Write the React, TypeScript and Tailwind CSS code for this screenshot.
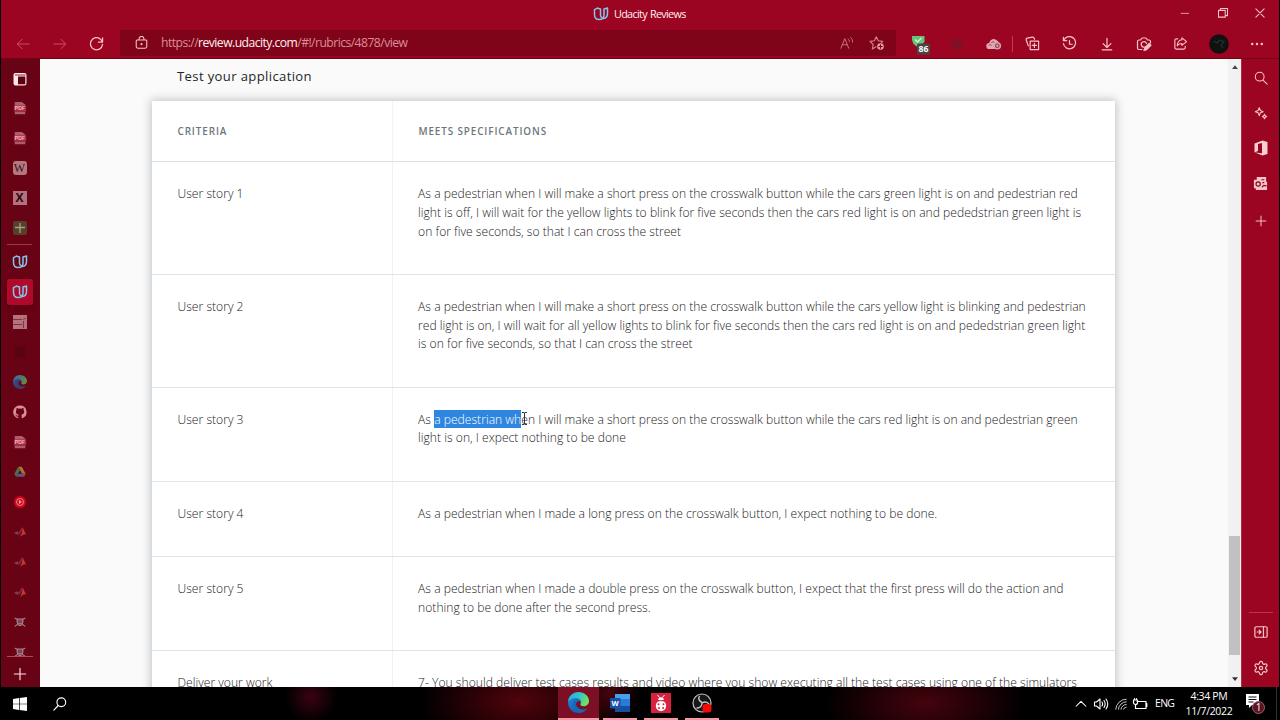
import React from "react";

type IconProps = { children: React.ReactNode; size?: string; color?: string; w?: number; box?: string };

function Icon({ children, size = "size-4", color = "text-[#f6c3c8]", w = 1, box = "0 0 16 16" }: IconProps) {
  return (
    <svg viewBox={box} className={`${size} ${color} shrink-0`} fill="none" stroke="currentColor" strokeWidth={w} strokeLinecap="round" strokeLinejoin="round">
      {children}
    </svg>
  );
}

function Udacity({ size = "size-4" }: { size?: string }) {
  return (
    <Icon size={size} color="text-[#86c3ea]" w={1.5}>
      <path d="M4.500 2.200L1.500 3.700v4.600c0 3.200 1.800 5.300 4.600 5.300C9 13.600 11 12 11 9V3l3.500-1v5.400c0 3-1.700 4.800-4.200 5.200" />
      <path d="M4.500 2.200L7.500 3v6.200c0 1.300.6 2 1.700 2.200" />
    </Icon>
  );
}

function Pdf() {
  return (
    <svg viewBox="0 0 16 16" className="size-3.5 shrink-0">
      <path d="M2 1h8l4 3v2H2zM2 12h12v3H2z" fill="#a9606c" />
      <rect x="1" y="5" width="14" height="7" fill="#b02a42" />
      <text x="8" y="10.800" textAnchor="middle" fontSize="6" fontWeight="700" fontFamily="Liberation Sans, sans-serif" fill="#f0c0c6">PDF</text>
    </svg>
  );
}

function Matlab() {
  return (
    <svg viewBox="0 0 16 16" className="size-3.5 shrink-0">
      <path d="M1 9l4-2 2 2-2 2z" fill="#6e4658" />
      <path d="M6 8.500c2-1 2.500-4.500 4-6l.5 4-3.500 5c-.8 0-.8-1.500-1.500-2z" fill="#8c2232" />
      <path d="M10.500 2.500c1.500 1 2.500 5 4.500 8.500-2-.7-3-.5-4.500 1l-2.500 1.500c2.500-4 3.200-7 2.500-11z" fill="#c23a3c" />
    </svg>
  );
}

function Skull() {
  return (
    <Icon size="size-3" color="text-[#a98088]" w={1.5}>
      <path d="M1.500 3l3 1.500M14.500 3l-3 1.500M1.500 13.500l3.500-2.500M14.500 13.500L11 11" />
      <path d="M5 4h6l1 3-1 3.500H5L4 7z" fill="#7c4652" /><path d="M6.500 12.500h3" />
    </Icon>
  );
}

function EdgeLogo({ size }: { size: string }) {
  return (
    <svg viewBox="0 0 20 20" className={`${size} shrink-0`}>
      <defs>
        <linearGradient id="edgeTop" x1="0" x2="1" y1="0" y2="0.3">
          <stop offset="0" stopColor="#2aa8de" />
          <stop offset="0.6" stopColor="#35c6c8" />
          <stop offset="1" stopColor="#6be35c" />
        </linearGradient>
        <linearGradient id="edgeLow" x1="0" x2="1" y1="0" y2="1">
          <stop offset="0" stopColor="#1b86d8" />
          <stop offset="1" stopColor="#124f9c" />
        </linearGradient>
      </defs>
      <path d="M0 10C0 4 4.500 0 10 0s10 4 10 8.500c0 3-2.200 5-5 5-2.500 0-3.500-1-3.200-1.800C13 10 12 6.500 8 6.500 4 6.500 1 8 0 10z" fill="url(#edgeTop)" />
      <path d="M0 10c1-2.800 4-4.300 7.500-4.300 2.700 0 4.500 1.800 4.700 3.300-1-.9-3.700-.5-4.400 1.800-.8 2.800 2 6 5.700 6 1.900 0 3.400-.6 4.700-1.200C16.500 18.300 13.600 20 10 20 4.500 20 0 15.500 0 10z" fill="url(#edgeLow)" />
      <path d="M5 9.500C3.500 14 7 19.500 12 19.800c3-.8 5-2.500 6.200-4.200-5 2.500-10.400 0-10.600-4C7.500 9.500 9 8 10.500 8 8.500 6.800 6 7.500 5 9.500z" fill="#1769b5" />
    </svg>
  );
}

function Slot({ children }: { children: React.ReactNode }) {
  return <div className="flex h-[30px] w-full shrink-0 items-center justify-center">{children}</div>;
}

function Tool({ children }: { children: React.ReactNode }) {
  return <div className="flex w-[37px] shrink-0 items-center justify-center">{children}</div>;
}

function TitleBar() {
  return (
    <div className="flex h-[30px] shrink-0 items-center">
      <div className="w-[592px]" />
      <div className="flex pb-[3px]"><Udacity /></div>
      <div className="ml-[5px] flex-1 pb-[2px] text-[10.800px] tracking-[-0.680px] whitespace-nowrap text-[#fff0f1] [word-spacing:1px]">Udacity Reviews</div>
      <div className="flex w-[112px] items-center justify-between pb-[4px]">
        <div className="flex w-[37px] justify-center"><Icon size="size-3"><path d="M1.500 8.500h10" /></Icon></div>
        <div className="flex w-[36px] justify-center">
          <Icon size="size-3"><path d="M2 4.500h9v9H2zM4.500 4.500V2h9.500v9.500h-3" strokeWidth="1.400" /></Icon>
        </div>
        <div className="flex w-[38px] justify-center"><Icon size="size-3" w={1.4}><path d="M2.500 2.500l11 11M13.500 2.500l-11 11" /></Icon></div>
      </div>
    </div>
  );
}

function Toolbar() {
  return (
    <div className="flex h-[29px] shrink-0 items-stretch border-b border-[#740217]">
      <div className="flex w-[119px] items-center pb-px pl-[3px]">
        <Tool><Icon size="size-3.5" color="text-[#d0505f]" w={1.100}><path d="M15 8H1.500M7 2.500L1.500 8 7 13.500" /></Icon></Tool>
        <Tool><Icon size="size-3.5" color="text-[#d0505f]" w={1.100}><path d="M1 8h13.500M9 2.500L14.500 8 9 13.500" /></Icon></Tool>
        <Tool><Icon size="size-[15px]" w={1.300}><path d="M14.300 6.500A6.500 6.500 0 1 0 14.500 9M14.500 2v4.500H10" /></Icon></Tool>
      </div>
      <div className="mb-[2px] flex w-[776px] items-center bg-[#800419]">
        <div className="flex w-[41px] justify-center pb-px pl-px">
          <Icon size="size-[13px]" w={1.3}><path d="M2.500 5h11a1 1 0 0 1 1 1v7a2 2 0 0 1-2 2h-9a2 2 0 0 1-2-2V6a1 1 0 0 1 1-1zM5 5V3.500a3 3 0 0 1 6 0V5" /><circle cx="8" cy="10" r=".6" fill="currentColor" /></Icon>
        </div>
        <div className="flex-1 text-[12.200px] tracking-[-0.560px] whitespace-nowrap text-[#da8d98]">
          https://<span className="text-[#fff0f1]">review.udacity.com</span>/#!/rubrics/4878/view
        </div>
        <div className="flex w-[30px] justify-center">
          <Icon size="size-3.5" color="text-[#cc7480]" w={1.1}><path d="M1 14L5.500 3 10 14M2.700 10h5.600M9.500 3.500c1 .8 1.300 2 1.300 3M12 1.500c1.800 1.300 2.500 3.500 2.300 5.500" /></Icon>
        </div>
        <div className="mr-1 flex w-[30px] justify-center">
          <Icon color="text-[#d8808c]" w={1.1}>
            <path d="M7 11.700L3.300 14l.9-4.500L1 6.400l4.400-.6L7.300 1.700l2 4.100 4.400.6-1.500 1.500" />
            <circle cx="11.500" cy="11.500" r="3.300" fill="#dda0a8" stroke="none" /><path d="M11.500 9.800v3.400M9.800 11.500h3.400" stroke="#800419" />
          </Icon>
        </div>
      </div>
      <div className="flex w-[116px] items-center pl-[5px]">
        <Tool>
          <svg viewBox="0 0 18 20" className="mt-0.5 h-5 w-[18px] overflow-visible">
            <path d="M1 1h12.500v6L7 12.500 2.500 9 1 5z" fill="#66c478" /><path d="M4 4.500l2.500 2.500L10.500 3" stroke="#d5f2d9" strokeWidth="1.300" fill="none" />
            <rect x="6" y="8.500" width="13" height="11" rx="1.500" fill="#4a4446" />
            <text x="12.500" y="17.300" textAnchor="middle" fontSize="8.600" fontWeight="700" fontFamily="Open Sans, sans-serif" fill="#fff">86</text>
          </svg>
        </Tool>
        <Tool><div className="size-2.5 rounded-xs bg-[#7e1226] blur-[1px]" /></Tool>
        <Tool>
          <svg viewBox="0 0 16 16" className="size-4">
            <path d="M3.500 13a3 3 0 0 1-.3-6A4.500 4.500 0 0 1 11 4.500a3 3 0 0 1 1.500 2L13 13z" fill="#e0a9b2" /><path d="M3 9.500c.5-1.200 2-1.200 2.500 0M5.500 6.500c.8-.8 2-.8 2.800 0" fill="none" stroke="#a33649" />
            <circle cx="11.300" cy="9.800" r="3.800" fill="#cfa4ae" /><circle cx="11.300" cy="9.800" r="1.800" fill="none" stroke="#8f2c40" />
          </svg>
        </Tool>
      </div>
      <div className="my-1.5 w-px bg-[#c33d50]" />
      <div className="flex flex-1 items-center pb-px pl-[1px]">
        <Tool><Icon size="size-[15px]" w={1.300}><path d="M5.500 5.500h9v9h-9zM10 7.800v4.400M7.800 10h4.400M3.500 10.500L1.300 4.300a1.500 1.500 0 0 1 1-2L8 1.300c.8-.1 1.500.3 1.800 1.200l.4 1" /></Icon></Tool>
        <Tool><Icon size="size-[15px]" w={1.300}><path d="M2 4.500A6.500 6.500 0 1 1 1.500 8M1.500 1.500v3.500H5M8 4.800v4h3" /></Icon></Tool>
        <Tool><Icon size="size-3.5" w={1.400}><path d="M8 1.500v10M3.500 7.500L8 12l4.500-4.500M2.500 14.700h11" /></Icon></Tool>
        <Tool><Icon w={1.200}><path d="M6 13.500H3a1.500 1.500 0 0 1-1.500-1.500V5.500A1.500 1.500 0 0 1 3 4h1.500L6 2h4l1.500 2H13a1.500 1.500 0 0 1 1.500 1.500V7M8.500 11a2.700 2.700 0 1 1 2-3.500" /><path d="M8 14.500l.8-2.700L13.200 7.500l1.800 1.800-4.300 4.300z" fill="currentColor" /></Icon></Tool>
        <Tool><Icon size="size-[15px]" w={1.200}><path d="M5 3H3.500A1.500 1.500 0 0 0 2 4.500v8A1.500 1.500 0 0 0 3.500 14h8a1.500 1.500 0 0 0 1.500-1.500V11M9.500 2l5 4-5 4V8C7 8 5.500 8.500 4.500 10.500 4.700 7 6.500 4.300 9.500 4z" /></Icon></Tool>
        <Tool>
          <svg viewBox="0 0 20 20" className="ml-0.5 size-5 shrink-0"><circle cx="10" cy="10" r="9.800" fill="#101212" /><path d="M5 7l3 2 3-3 4 2-3 3 2 3" stroke="#25302e" fill="none" strokeWidth="1.200" /></svg>
        </Tool>
        <div className="ml-px flex w-[40px] justify-center"><Icon size="size-3.5"><g fill="currentColor" stroke="none"><circle cx="2.500" cy="8" r="1.400" /><circle cx="8" cy="8" r="1.400" /><circle cx="13.500" cy="8" r="1.400" /></g></Icon></div>
      </div>
    </div>
  );
}

function LeftRail() {
  return (
    <div className="flex w-[39px] shrink-0 flex-col items-center bg-[#680215] pr-[2px]">
      <div className="flex h-[34px] shrink-0 items-center pt-[6px]">
        <svg viewBox="0 0 14 14" className="size-3.5"><path d="M2.500 1h9a2 2 0 0 1 2 2v8.500a2 2 0 0 1-2 2h-9a2 2 0 0 1-2-2V3a2 2 0 0 1 2-2z" fill="#ffe6e8" /><path d="M5 4.500h7.300v7.800H5z" fill="#5c0212" /><path d="M2 3h10.500" stroke="#8a2635" /></svg>
      </div>
      <Slot><Pdf /></Slot>
      <Slot><Pdf /></Slot>
      <Slot><div className="flex size-3.5 items-center justify-center rounded-[3px] bg-[#b57780] font-['Liberation_Serif',serif] text-[12px] text-[#3b1118]">W</div></Slot>
      <Slot><div className="flex size-3.5 items-center justify-center bg-[#b4727d] text-[12px] font-bold text-[#280a10]">X</div></Slot>
      <Slot><svg viewBox="0 0 14 14" className="size-3.5"><rect width="14" height="14" rx="2" fill="#554029" /><path d="M7 2v10M2 6.500h10" stroke="#a5a087" strokeWidth="1.300" /></svg></Slot>
      <div className="mt-px mb-[2px] h-px w-[25px] shrink-0 bg-[#9c3c4b]" />
      <Slot><Udacity /></Slot>
      <Slot><div className="flex size-[26px] items-center justify-center rounded-[3px] bg-[#b00a2a] shadow-md"><Udacity /></div></Slot>
      <Slot><svg viewBox="0 0 14 14" className="size-3.5"><rect width="14" height="14" fill="#b5717c" /><path d="M0 4.500h9M0 9.500h9M10 4.500l3-1.500M10.500 6v7" stroke="#84303f" /></svg></Slot>
      <Slot><div className="size-2.5 bg-[#580414] blur-[1px]" /></Slot>
      <Slot><div className="flex opacity-60"><EdgeLogo size="size-3.5" /></div></Slot>
      <Slot>
        <svg viewBox="0 0 16 16" className="size-3.5"><path fill="#d98e98" d="M8 .5a7.500 7.500 0 0 0-2.400 14.700c.4.100.5-.2.500-.4v-1.400c-2.100.5-2.500-1-2.500-1-.3-.9-.8-1.100-.8-1.100-.7-.5 0-.5 0-.5.8.1 1.200.8 1.200.8.7 1.200 1.800.8 2.200.6 0-.5.300-.8.500-1-1.700-.2-3.400-.8-3.400-3.700 0-.8.300-1.500.8-2-.1-.2-.3-1 .1-2 0 0 .6-.2 2 .8a7 7 0 0 1 3.700 0c1.400-1 2-.8 2-.8.4 1 .2 1.800.1 2 .5.500.8 1.200.8 2 0 2.900-1.800 3.500-3.400 3.700.3.200.5.700.5 1.400v2.100c0 .2.100.5.500.4A7.500 7.500 0 0 0 8 .5z" /></svg>
      </Slot>
      <Slot><Pdf /></Slot>
      <Slot><svg viewBox="0 0 16 16" className="size-3.5"><path d="M6 2h4l4.500 8h-4z" fill="#a87630" /><path d="M6 2L1.500 10l2 3.500L8 6z" fill="#4a7148" /><path d="M3.500 13.500h9l2-3.500H5.500z" fill="#54598c" /><path d="M11.500 10h3l-2 3.500z" fill="#b23a36" /></svg></Slot>
      <Slot><svg viewBox="0 0 16 16" className="size-3.5"><circle cx="8" cy="8" r="7" fill="#d1051a" /><circle cx="8" cy="8" r="4" fill="none" stroke="#ea9096" /><path d="M6.800 5.800L10.300 8l-3.500 2.200z" fill="#eda6ac" /></svg></Slot>
      <Slot><Matlab /></Slot>
      <Slot><Matlab /></Slot>
      <Slot><Matlab /></Slot>
      <Slot><Skull /></Slot>
      <div className="flex h-[19px] w-full shrink-0 items-start justify-center overflow-hidden pt-[9px]"><Skull /></div>
      <div className="h-px w-[26px] shrink-0 bg-[#b04a58]" />
      <div className="flex flex-1 items-center pt-[3px]"><Icon size="size-3.5" color="text-[#ffe2e4]" w={1.300}><path d="M8 1.500v13M1.500 8h13" /></Icon></div>
    </div>
  );
}

function RightRail() {
  return (
    <div className="flex w-[38px] shrink-0 flex-col items-center border-l border-[#b8283f]">
      <div className="flex h-[37px] shrink-0 items-center"><Icon size="size-3.5" w={1.200}><circle cx="6.500" cy="6.500" r="5" /><path d="M10.300 10.300L15 15" /></Icon></div>
      <div className="flex h-[34px] shrink-0 items-center"><Icon size="size-3.5" w={1.300}><path d="M6 2l1.300 3.200L10.500 6.500 7.300 7.800 6 11 4.700 7.800 1.500 6.500l3.200-1.300zM12 9.500l.8 1.700 1.700.8-1.700.8-.8 1.700-.8-1.700-1.700-.8 1.700-.8z" /></Icon></div>
      <div className="flex h-[36px] shrink-0 items-center"><svg viewBox="0 0 16 16" className="size-4"><path fillRule="evenodd" d="M9.500.5L14.500 2v12l-5 1.500-7.500-3 7 .8V3L5 4v7l-3.500 1.500V3.500z" fill="#f9cfd2" /></svg></div>
      <div className="flex h-[35px] shrink-0 items-center"><svg viewBox="0 0 16 16" className="size-[15px]"><path d="M4 1h10v5h1v9H3v-2H1V4h3z" fill="#f6c3c8" /><circle cx="5.500" cy="8.500" r="2.300" fill="none" stroke="#7e0820" strokeWidth="1.300" /><path d="M9 4h3M10 7h2M9.500 12l2-2 3 .5" stroke="#8f0a25" fill="none" strokeWidth="1.200" /></svg></div>
      <div className="flex h-[39px] shrink-0 items-center"><Icon size="size-3"><path d="M8 1.500v13M1.500 8h13" strokeWidth="1.300" /></Icon></div>
      <div className="flex-1" />
      <div className="h-px w-[24px] bg-[#c03247]" />
      <div className="flex h-[38px] shrink-0 items-center"><Icon size="size-3.5" w={1.400}><rect x="1" y="2" width="14" height="12" rx="1.500" /><path d="M10.800 2v12M3.500 8h4.500M6 6l2 2-2 2" /></Icon></div>
      <div className="mb-[3px] flex h-[33px] shrink-0 items-center">
        <Icon size="size-4" w={1.800} box="0 0 24 24"><path d="M12.220 2h-.440a2 2 0 0 0-2 2v.180a2 2 0 0 1-1 1.730l-.430.250a2 2 0 0 1-2 0l-.150-.080a2 2 0 0 0-2.730.730l-.220.380a2 2 0 0 0 .730 2.730l.150.100a2 2 0 0 1 1 1.720v.510a2 2 0 0 1-1 1.740l-.150.090a2 2 0 0 0-.730 2.730l.220.380a2 2 0 0 0 2.730.730l.150-.080a2 2 0 0 1 2 0l.430.250a2 2 0 0 1 1 1.730V20a2 2 0 0 0 2 2h.440a2 2 0 0 0 2-2v-.180a2 2 0 0 1 1-1.730l.430-.250a2 2 0 0 1 2 0l.150.080a2 2 0 0 0 2.730-.730l.220-.390a2 2 0 0 0-.730-2.730l-.150-.080a2 2 0 0 1-1-1.740v-.500a2 2 0 0 1 1-1.740l.150-.090a2 2 0 0 0 .730-2.730l-.220-.380a2 2 0 0 0-2.730-.730l-.150.080a2 2 0 0 1-2 0l-.430-.250a2 2 0 0 1-1-1.730V4a2 2 0 0 0-2-2z" /><circle cx="12" cy="12" r="2.500" /></Icon>
      </div>
    </div>
  );
}

const rows: { title: string; lines: React.ReactNode[] }[] = [
  {
    title: "User story 1",
    lines: [
      "As a pedestrian when I will make a short press on the crosswalk button while the cars green light is on and pedestrian red",
      "light is off, I will wait for the yellow lights to blink for five seconds then the cars red light is on and pededstrian green light is",
      "on for five seconds, so that I can cross the street",
    ],
  },
  {
    title: "User story 2",
    lines: [
      "As a pedestrian when I will make a short press on the crosswalk button while the cars yellow light is blinking and pedestrian",
      "red light is on, I will wait for all yellow lights to blink for five seconds then the cars red light is on and pededstrian green light",
      "is on for five seconds, so that I can cross the street",
    ],
  },
  {
    title: "User story 3",
    lines: [
      <>
        As <span className="bg-[#2f86e0] py-[0.5px] text-white">a pedestrian wh</span>
        <span className="relative">
          en
          <svg viewBox="0 0 7 13" className="absolute top-px left-0 h-[13px] w-[7px]" fill="none" stroke="#333">
            <path d="M1 .5h2l.5.500.500-.500h2M3.500 1v11M1 12.500h2l.5-.5.500.500h2" />
          </svg>
        </span>{" "}
        I will make a short press on the crosswalk button while the cars red light is on and pedestrian green
      </>,
      "light is on, I expect nothing to be done",
    ],
  },
  { title: "User story 4", lines: ["As a pedestrian when I made a long press on the crosswalk button, I expect nothing to be done."] },
  {
    title: "User story 5",
    lines: [
      "As a pedestrian when I made a double press on the crosswalk button, I expect that the first press will do the action and",
      "nothing to be done after the second press.",
    ],
  },
  { title: "Deliver your work", lines: ["7- You should deliver test cases results and video where you show executing all the test cases using one of the simulators"] },
];

function Page() {
  return (
    <div className="flex min-w-0 flex-1 overflow-hidden bg-[#fafafa]">
      <div className="min-w-0 flex-1 overflow-hidden pl-[112px]">
        <h2 className="h-[42px] pt-[7px] pl-[25px] text-[13.100px] leading-[20px] tracking-[0.360px] text-[#1f2629]">Test your application</h2>
        <div className="w-[963.400px] bg-white text-[12.100px] leading-[18.750px] font-light tracking-[0.012px] text-[#1c2124] shadow-[0_0_9px_1px_rgba(46,61,73,0.3)]">
          <div className="flex h-[61px] border-b border-[#dbe2e4] text-[9.900px] font-semibold tracking-[0.900px] text-[#6d767c]">
            <div className="flex w-[241.400px] items-center border-r border-[#f0f2f3] pt-px pl-[25.500px]">CRITERIA</div>
            <div className="flex items-center pt-px pl-[25px]">MEETS SPECIFICATIONS</div>
          </div>
          {rows.map((row) => (
            <div key={row.title} className="flex border-b border-[#dfe5e7]">
              <div className="w-[241.400px] shrink-0 border-r border-[#eef1f2] pt-[23px] pl-[25.500px]">{row.title}</div>
              <div className="pt-[23px] pb-[32.600px] pl-[24.700px] whitespace-nowrap">
                {row.lines.map((line, i) => (
                  <div key={i}>{line}</div>
                ))}
              </div>
            </div>
          ))}
        </div>
      </div>
      <div className="flex w-[13px] shrink-0 flex-col items-center bg-[#f1f1f1] py-[6px]">
        <svg viewBox="0 0 8 5" className="h-[4px] w-[6px]"><path d="M0 5L4 0l4 5z" fill="#444" /></svg>
        <div className="flex-1" />
        <div className="h-[119px] w-[11px] bg-[#c1c1c1]" />
        <div className="h-[22px]" />
        <svg viewBox="0 0 8 5" className="h-[4px] w-[6px]"><path d="M0 0l4 5 4-5z" fill="#333" /></svg>
      </div>
    </div>
  );
}

function TaskApp({ children, active, width }: { children: React.ReactNode; active?: boolean; width: string }) {
  return (
    <div className={`flex flex-col items-center ${width} ${active ? "bg-[#7c0f25]" : ""}`}>
      <div className="flex flex-1 items-center">{children}</div>
      <div className="h-[2px] w-full bg-[#f59aa5]" />
    </div>
  );
}

function Taskbar() {
  return (
    <div className="flex h-[33px] shrink-0 bg-black bg-[radial-gradient(circle_at_311px_10px,#3a0312_0,transparent_26px),radial-gradient(100px_50px_at_520px_14px,#52030c_0,transparent_100%),radial-gradient(30px_30px_at_610px_6px,#45040d_0,transparent_100%),radial-gradient(100px_50px_at_925px_16px,#45030d_0,transparent_100%)] text-white">
      <div className="flex w-[40px] items-center justify-center">
        <svg viewBox="0 0 14 14" className="size-3.5"><path d="M0 2l6-1v5.700H0zM6.700.900L14 0v6.700H6.700zM0 7.300h6V13l-6-1zM6.700 7.300H14V14l-7.300-1z" fill="#fff" /></svg>
      </div>
      <div className="flex w-[39px] items-center justify-center"><Icon color="text-white" size="size-3.5" w={1.300}><circle cx="9.500" cy="6" r="5" /><path d="M6 9.700L1 15" /></Icon></div>
      <div className="w-[479px]" />
      <div className="flex gap-[4px]">
        <TaskApp active width="w-[41px]"><EdgeLogo size="size-[21px]" /></TaskApp>
        <TaskApp width="w-[34px]">
          <svg viewBox="0 0 20 18" className="h-[18px] w-5"><rect x="5" width="15" height="18" rx="1" fill="#2a7bd6" /><rect x="5" width="15" height="5" fill="#49a0ea" /><rect x="5" y="12" width="15" height="6" fill="#164fa0" /><rect y="4" width="10.500" height="10.500" rx="1" fill="#1950a8" /><text x="5.200" y="12" textAnchor="middle" fontSize="7.500" fontWeight="700" fontFamily="Open Sans, sans-serif" fill="#fff">W</text></svg>
        </TaskApp>
        <div className="ml-[3px] flex"><TaskApp width="w-[34px]">
          <svg viewBox="0 0 20 20" className="size-5"><rect width="20" height="20" fill="#d8213f" /><path d="M6.500 2l2 2.500M13.500 2l-2 2.500" stroke="#fff" /><path d="M7.200 7a2.800 2.800 0 0 1 5.600 0z" fill="#fff" /><ellipse cx="10" cy="12.800" rx="5.200" ry="5.400" fill="#fff" /><g fill="#d8213f"><circle cx="7.500" cy="11.300" r="1" /><circle cx="12.500" cy="11.300" r="1" /><circle cx="8" cy="15" r="1" /><circle cx="12" cy="15" r="1" /><path d="M5 7.500h10v.700H5z" /></g></svg>
        </TaskApp></div>
        <div className="ml-[3px] flex"><TaskApp width="w-[34px]">
          <svg viewBox="0 0 20 20" className="size-5"><circle cx="10" cy="10" r="9" fill="#17171a" stroke="#c9c4c6" strokeWidth="1.200" /><path d="M10 9.500C7 8 6 5.500 7.500 3M10 10c3-2 6-1 7 1.500M10 10c0 3-2 5.500-5.500 5" stroke="#c9c4c6" strokeWidth="1.400" fill="none" /><rect x="10.500" y="11" width="9" height="8.500" rx="3" fill="#f50a0a" /></svg>
        </TaskApp></div>
      </div>
      <div className="flex-1" />
      <div className="flex items-center">
        <Icon color="text-white" size="size-3" w={1.400}><path d="M1.500 11L8 4.500l6.500 6.500" /></Icon>
        <div className="ml-[6px] flex"><Icon color="text-white" size="size-4" w={1.100}><path d="M1.500 6h2L7 3v10L3.500 10h-2zM9 6c.8 1.300.8 2.700 0 4M11 4.500c1.500 2.300 1.500 4.700 0 7M13 3c2.300 3.300 2.300 6.700 0 10" /></Icon></div>
        <div className="ml-[5px] flex"><Icon color="text-[#ccc]" size="size-3.5" w={1.100}><path d="M2 14A12 12 0 0 1 14 2.500M5 14a9 9 0 0 1 9-8.500M8 14a6 6 0 0 1 6-5.500M11 14a3 3 0 0 1 3-2.500" /></Icon></div>
        <div className="ml-[4px] flex"><Icon color="text-white" size="size-4" w={1.200}><path d="M5 5.500h9v7H3.500v-2M14.800 7.500v3M1.500 4h4v2.500a2 2 0 0 1-4 0zM2.500 2.500V4M4.500 2.500V4M3.500 8.500v2" /></Icon></div>
        <div className="ml-[7px] w-[21px] text-[10.500px] tracking-[-0.700px] whitespace-nowrap">ENG</div>
        <div className="ml-[8px] w-[50px] text-center text-[10.500px] leading-[15px] tracking-[-0.330px] whitespace-nowrap">4:34 PM<br />11/7/2022</div>
        <div className="mr-[10px] ml-[10px] flex">
          <svg viewBox="0 0 22 22" className="size-[22px]"><path d="M2 1h13v11H8l-3 3v-3H2z" fill="#fff" /><path d="M4.500 4h8M4.500 6.500h8M4.500 9h5" stroke="#111" /><circle cx="14.500" cy="14.500" r="6" fill="#5e1322" stroke="#98606b" /><text x="14.500" y="18" textAnchor="middle" fontSize="10" fontFamily="Open Sans, sans-serif" fill="#fff">1</text></svg>
        </div>
        <div className="mr-[3px] h-[33px] w-px bg-[#333]" />
      </div>
    </div>
  );
}

export default function App() {
  return (
    <div className="flex h-[720px] w-[1280px] flex-col overflow-hidden bg-black font-['Open_Sans','Noto_Sans',sans-serif]">
      <div className="mx-px flex min-h-0 flex-1 flex-col bg-[#9c0521]">
        <TitleBar />
        <Toolbar />
        <div className="flex min-h-0 flex-1">
          <LeftRail />
          <Page />
          <RightRail />
        </div>
      </div>
      <Taskbar />
    </div>
  );
}
